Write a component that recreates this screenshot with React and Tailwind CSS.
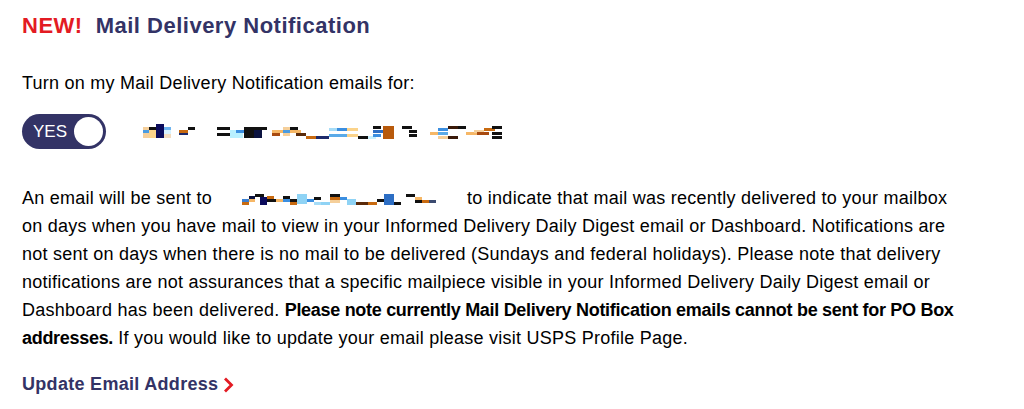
import React from "react";

// Pixel mosaic used to stand in for the redacted name / email
const Mosaic = ({ cells, vw, vh, width, height }) => (
  <svg width={width} height={height} viewBox={`0 0 ${vw} ${vh}`} preserveAspectRatio="none" shapeRendering="crispEdges">
    {cells.map(([x, y, w, h, c], i) => (
      <rect key={i} x={x} y={y} width={w} height={h} fill={c} />
    ))}
  </svg>
);

const nameCells = [
  [0, 3, 5, 3, "#f5cf9a"], [0, 6, 5, 3, "#4a9be0"], [0, 9, 5, 5, "#f5cf9a"],
  [5, 3, 5, 3, "#111"], [5, 6, 5, 8, "#fbd38a"], [10, 0, 6, 14, "#0b0b5c"],
  [16, 3, 6, 3, "#6db4f0"], [16, 6, 6, 4, "#d8f2ff"], [16, 10, 6, 4, "#f3dcc0"],
  [28, 6, 7, 3, "#c86a10"], [28, 9, 7, 2, "#1d2a6b"], [35, 3, 5, 3, "#111"],
  [57, 3, 10, 3, "#111"], [57, 9, 10, 3, "#111"], [67, 6, 10, 8, "#b9f0ff"],
  [72, 6, 6, 3, "#3b8ee0"], [78, 3, 8, 11, "#111"], [86, 3, 10, 3, "#111"], [86, 6, 6, 8, "#0b1340"],
  [100, 6, 8, 3, "#f6b766"], [100, 9, 6, 3, "#a84a10"], [108, 3, 6, 3, "#f5cf9a"],
  [108, 6, 6, 3, "#4a9be0"], [108, 9, 6, 3, "#f5cf9a"], [114, 3, 6, 3, "#111"],
  [114, 6, 8, 3, "#f6b766"], [118, 9, 8, 3, "#5a2a0a"], [126, 12, 8, 3, "#c86a10"],
  [134, 12, 10, 3, "#1d2a6b"], [144, 4, 10, 3, "#a6dcf7"], [150, 4, 8, 3, "#3b8ee0"],
  [144, 10, 14, 3, "#5aaae8"], [158, 4, 8, 3, "#fbd38a"], [158, 10, 8, 3, "#fbd38a"],
  [166, 12, 8, 3, "#111"], [174, 12, 6, 3, "#c9f1ff"], [178, 2, 6, 3, "#111"],
  [178, 6, 8, 3, "#2d6ec4"], [178, 10, 6, 3, "#3b8ee0"], [186, 2, 8, 13, "#b85a0c"],
  [200, 2, 8, 3, "#111"], [206, 6, 6, 3, "#111"], [206, 10, 6, 3, "#111"],
  [222, 8, 6, 3, "#f6b766"], [228, 4, 8, 3, "#3b8ee0"], [228, 8, 8, 3, "#5aaae8"],
  [228, 12, 8, 3, "#f5cf9a"], [236, 2, 8, 3, "#3a1a0a"], [236, 12, 8, 3, "#3a1a0a"],
  [244, 2, 6, 3, "#111"], [250, 8, 8, 3, "#f6b766"], [256, 6, 8, 3, "#f5cf9a"],
  [258, 8, 10, 3, "#a84a10"], [264, 4, 8, 3, "#c86a10"], [270, 2, 8, 3, "#111"],
  [270, 8, 8, 3, "#111"], [270, 12, 8, 3, "#111"],
];

const emailCells = [
  [0, 7, 6, 3, "#3b7fd0"], [0, 10, 6, 3, "#c86a10"], [6, 4, 5, 3, "#0b1340"],
  [6, 7, 5, 3, "#f6b766"], [11, 2, 8, 3, "#111"], [15, 5, 6, 8, "#0b0b5c"],
  [21, 4, 6, 3, "#c86a10"], [21, 7, 8, 3, "#111"], [29, 7, 6, 3, "#f6b766"],
  [35, 4, 6, 3, "#111"], [35, 7, 6, 3, "#3b8ee0"], [41, 7, 6, 3, "#111"],
  [41, 10, 6, 3, "#c86a10"], [47, 2, 8, 10, "#8fd3f5"], [55, 7, 6, 3, "#3b8ee0"],
  [61, 5, 6, 3, "#111"], [61, 10, 6, 3, "#a6dcf7"], [67, 10, 8, 3, "#8fd3f5"],
  [75, 2, 8, 3, "#111"], [75, 5, 8, 3, "#c86a10"], [75, 8, 8, 3, "#f5cf9a"],
  [83, 5, 6, 3, "#3b8ee0"], [89, 7, 8, 6, "#8fd3f5"], [97, 10, 10, 3, "#5a2a0a"],
  [107, 10, 8, 3, "#c86a10"], [115, 7, 6, 3, "#111"], [121, 2, 8, 11, "#2d6ec4"],
  [129, 10, 6, 3, "#111"], [139, 2, 8, 3, "#111"], [147, 5, 6, 3, "#f6b766"],
  [147, 8, 6, 3, "#111"], [153, 8, 6, 3, "#c86a10"], [159, 8, 6, 3, "#3b4a70"],
];

export default function App() {
  return (
    <div className="w-[1024px] h-[409px] bg-white pl-[22px] pt-[13px] text-[#000] font-['Liberation_Sans',Arial,sans-serif]">
      <h2 className="text-[22px] tracking-[0.5px] font-bold leading-[26px] flex gap-[13px]">
        <span className="text-[#e31b23]">NEW!</span>
        <span className="text-[#333366]">Mail Delivery Notification</span>
      </h2>

      <p className="mt-[33px] text-[18px] tracking-[0.25px] leading-[22px]">
        Turn on my Mail Delivery Notification emails for:
      </p>

      <div className="mt-[20px] flex items-center">
        <button className="w-[84px] h-[35px] rounded-full bg-[#333366] flex items-center justify-between pl-[11px] pr-[3px]">
          <span className="text-white text-[17px]">YES</span>
          <span className="w-[29px] h-[29px] rounded-full bg-white"></span>
        </button>
        <div className="ml-[37px]">
          <Mosaic cells={nameCells} vw={280} vh={16} width={362} height={16} />
        </div>
      </div>

      <p className="mt-[35px] w-[950px] text-[18px] tracking-[0.25px] leading-[28px]">
        An email will be sent to
        <span className="inline-block align-middle ml-[30px] mr-[25px]">
          <Mosaic cells={emailCells} vw={170} vh={14} width={200} height={14} />
        </span>
        to indicate that mail was recently delivered to your mailbox on days when you have mail to view in your Informed
        Delivery Daily Digest email or Dashboard. Notifications are not sent on days when there is no mail to be
        delivered (Sundays and federal holidays). Please note that delivery notifications are not assurances that a
        specific mailpiece visible in your Informed Delivery Daily Digest email or Dashboard has been delivered.{" "}
        <strong className="font-bold tracking-[-0.3px]">
          Please note currently Mail Delivery Notification emails cannot be sent for PO Box addresses.
        </strong>{" "}
        If you would like to update your email please visit USPS Profile Page.
      </p>

      <a href="#" className="mt-[19px] inline-flex items-center gap-[5px] text-[18px] tracking-[0.3px] font-bold text-[#333366]">
        Update Email Address
        <svg width="11" height="16" viewBox="0 0 11 16" fill="none">
          <path d="M2 1.5 L8.5 8 L2 14.5" stroke="#e31b23" strokeWidth="2.8" />
        </svg>
      </a>
    </div>
  );
}
